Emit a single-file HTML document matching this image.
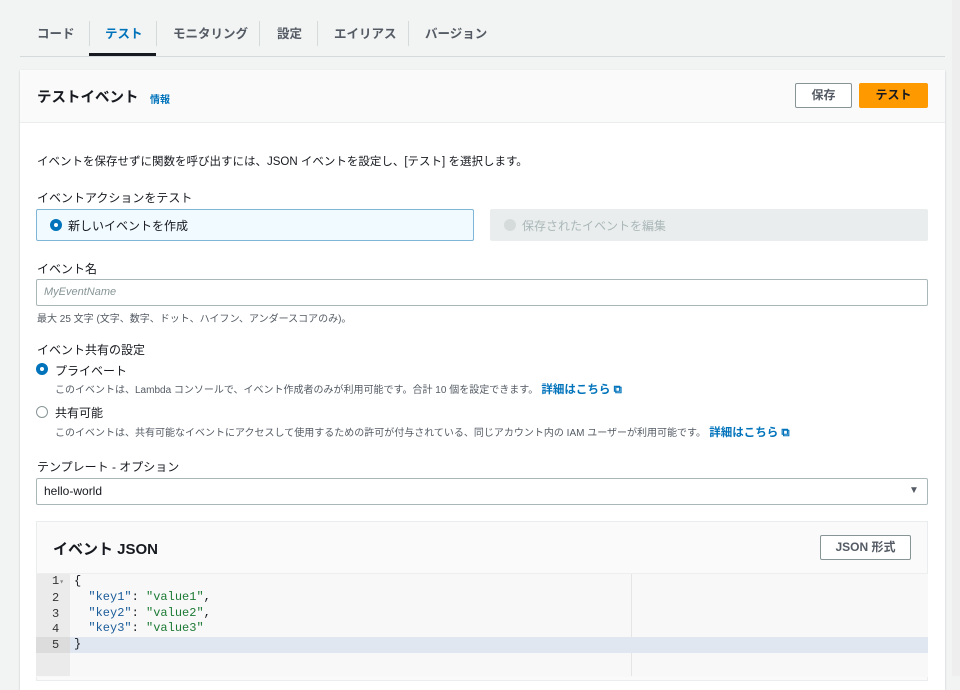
<!DOCTYPE html>
<html><head><meta charset="utf-8"><style>
body{margin:0;width:960px;height:676px;overflow:hidden;background:#f2f3f3;font-family:"Liberation Sans","Noto Sans CJK JP",sans-serif;color:#16191f;position:relative}
.a{position:absolute;white-space:nowrap}
.tab{position:absolute;top:23px;font-size:12.5px;font-weight:bold;color:#545b64}
.sep{position:absolute;top:21px;width:1px;height:25px;background:#d5dbdb}
.lbl{font-size:12px;color:#16191f}
.sm{font-size:10px;color:#545b64}
.link{color:#0073bb;font-weight:bold}
.radio{position:absolute;width:12px;height:12px;border-radius:50%;box-sizing:border-box}
.on{border:4px solid #0073bb;background:#fff}
.off{border:1px solid #879596;background:#fff}
.code{font-family:"Liberation Mono","DejaVu Sans Mono",monospace;font-size:12px}
</style></head><body>
<div class="tab" style="left:37px">コード</div>
<div class="sep" style="left:89px"></div>
<div class="tab" style="left:105px;color:#0073bb">テスト</div>
<div class="a" style="left:89px;top:53px;width:67px;height:3px;background:#16191f"></div>
<div class="sep" style="left:156px"></div>
<div class="tab" style="left:173px">モニタリング</div>
<div class="sep" style="left:259px"></div>
<div class="tab" style="left:277px">設定</div>
<div class="sep" style="left:317px"></div>
<div class="tab" style="left:334px">エイリアス</div>
<div class="sep" style="left:408px"></div>
<div class="tab" style="left:425px">バージョン</div>
<div class="a" style="left:20px;top:56px;width:925px;height:1px;background:#d5dbdb"></div>
<div class="a" style="left:952px;top:0;width:8px;height:676px;background:#eeeeee"></div>

<div class="a" style="left:20px;top:70px;width:925px;height:620px;background:#fff;box-shadow:0 1px 2px rgba(0,22,40,.2)"></div>
<div class="a" style="left:20px;top:70px;width:925px;height:52px;background:#fafafa;border-bottom:1px solid #eaeded"></div>
<div class="a" style="left:37px;top:86px;font-size:14.5px;font-weight:bold">テストイベント</div>
<div class="a link" style="left:150px;top:91px;font-size:10px">情報</div>
<div class="a" style="left:795px;top:83px;width:57px;height:25px;box-sizing:border-box;border:1px solid #879596;border-radius:2px;background:#fff;font-size:12px;font-weight:bold;color:#545b64;text-align:center;line-height:23px">保存</div>
<div class="a" style="left:859px;top:83px;width:69px;height:25px;border-radius:2px;background:#ff9900;font-size:12px;font-weight:bold;color:#16191f;text-align:center;line-height:25px">テスト</div>

<div class="a lbl" style="left:37px;top:153px;font-size:11.5px">イベントを保存せずに関数を呼び出すには、JSON イベントを設定し、[テスト] を選択します。</div>
<div class="a lbl" style="left:37px;top:189px">イベントアクションをテスト</div>
<div class="a" style="left:36px;top:209px;width:438px;height:32px;box-sizing:border-box;border:1px solid #7fb6d6;background:#f1faff;border-radius:2px"></div>
<div class="radio on" style="left:50px;top:219px"></div>
<div class="a lbl" style="left:68px;top:217px">新しいイベントを作成</div>
<div class="a" style="left:490px;top:209px;width:438px;height:32px;background:#eaeded;border-radius:2px"></div>
<div class="radio" style="left:504px;top:219px;background:#d5dbdb"></div>
<div class="a lbl" style="left:522px;top:217px;color:#aab7b8">保存されたイベントを編集</div>

<div class="a lbl" style="left:37px;top:260px">イベント名</div>
<div class="a" style="left:36px;top:279px;width:892px;height:27px;box-sizing:border-box;border:1px solid #aab7b8;border-radius:2px;background:#fff"></div>
<div class="a" style="left:44px;top:286px;font-size:11px;font-style:italic;color:#879596">MyEventName</div>
<div class="a sm" style="left:37px;top:310px">最大 25 文字 (文字、数字、ドット、ハイフン、アンダースコアのみ)。</div>

<div class="a lbl" style="left:37px;top:341px">イベント共有の設定</div>
<div class="radio on" style="left:36px;top:363px"></div>
<div class="a lbl" style="left:55px;top:362px">プライベート</div>
<div class="a sm" style="left:55px;top:381px">このイベントは、Lambda コンソールで、イベント作成者のみが利用可能です。合計 10 個を設定できます。<span class="link" style="font-size:11.5px"> 詳細はこちら ⧉</span></div>
<div class="radio off" style="left:36px;top:406px"></div>
<div class="a lbl" style="left:55px;top:404px">共有可能</div>
<div class="a sm" style="left:55px;top:424px">このイベントは、共有可能なイベントにアクセスして使用するための許可が付与されている、同じアカウント内の IAM ユーザーが利用可能です。<span class="link" style="font-size:11.5px"> 詳細はこちら ⧉</span></div>

<div class="a lbl" style="left:37px;top:458px">テンプレート - オプション</div>
<div class="a" style="left:36px;top:478px;width:892px;height:27px;box-sizing:border-box;border:1px solid #aab7b8;border-radius:2px;background:#fff"></div>
<div class="a" style="left:44px;top:484px;font-size:12px">hello-world</div>
<div class="a" style="left:909px;top:485px;font-size:10px;color:#545b64">▼</div>

<div class="a" style="left:36px;top:521px;width:892px;height:160px;background:#fafafa;border:1px solid #eaeded;box-sizing:border-box"></div>
<div class="a" style="left:53px;top:538px;font-size:15px;font-weight:bold">イベント JSON</div>
<div class="a" style="left:820px;top:535px;width:91px;height:25px;box-sizing:border-box;border:1px solid #879596;border-radius:2px;background:#fff;font-size:12px;font-weight:bold;color:#545b64;text-align:center;line-height:23px">JSON 形式</div>
<div class="a" style="left:36px;top:573px;width:892px;height:103px;background:#f8f8f8;border-top:1px solid #eee"></div>
<div class="a" style="left:36px;top:574px;width:34px;height:102px;background:#ebebeb"></div>
<div class="a" style="left:631px;top:574px;width:1px;height:102px;background:#e5e5e5"></div>
<div class="a" style="left:70px;top:637px;width:858px;height:16px;background:#e0e7f0"></div>
<div class="a" style="left:36px;top:637px;width:34px;height:16px;background:#dcdcdc"></div>
<div class="a code" style="left:52px;top:574px;line-height:15.8px;color:#333">1<span style="font-size:8px;color:#888">▾</span><br>2<br>3<br>4<br>5</div>
<div class="a code" style="left:74px;top:574px;line-height:15.8px;color:#16191f;white-space:pre">{
  <span style="color:#1a5c9a">"key1"</span>: <span style="color:#1d7a35">"value1"</span>,
  <span style="color:#1a5c9a">"key2"</span>: <span style="color:#1d7a35">"value2"</span>,
  <span style="color:#1a5c9a">"key3"</span>: <span style="color:#1d7a35">"value3"</span>
}</div>
</body></html>
